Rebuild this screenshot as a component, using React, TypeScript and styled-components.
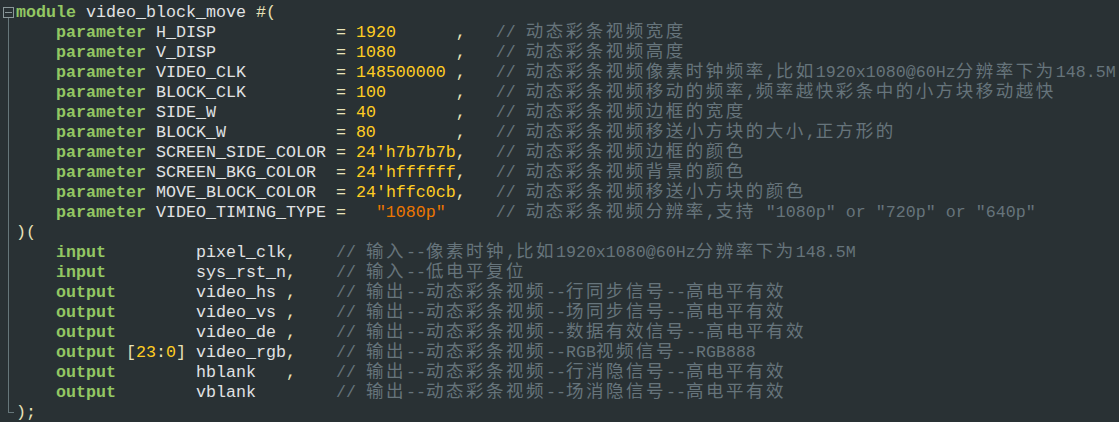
import React from "react";
import styled, { createGlobalStyle } from "styled-components";

type Kind = "kw" | "id" | "num" | "str" | "op" | "cm" | "sp";
type Token = [Kind, string];
type Fold = "start" | "mid" | "end";

const colors: Record<Kind, string> = {
  kw: "#93c763",
  id: "#e0e2e4",
  num: "#ffcd22",
  str: "#ec7600",
  op: "#e8e2b7",
  cm: "#66747b",
  sp: "#e0e2e4",
};

const Global = createGlobalStyle`
  html, body { margin: 0; padding: 0; background: #293134; }
  body { width: 1119px; height: 422px; overflow: hidden; }
`;

const Editor = styled.div`
  width: 1119px;
  height: 422px;
  box-sizing: border-box;
  padding-top: 3px;
  background: #293134;
  display: flex;
  flex-direction: column;
  font-family: "Liberation Mono", "Courier New", monospace;
  font-size: 16.667px;
  line-height: 20px;
`;

const Row = styled.div`
  display: grid;
  grid-template-columns: 16px 1fr;
  height: 20px;
`;

const Gutter = styled.div`
  width: 16px;
  height: 20px;
  display: flex;
`;

const Code = styled.div`
  white-space: pre;
  color: #e0e2e4;
  height: 20px;
`;

const Tok = styled.span<{ $k: Kind }>`
  color: ${(p) => colors[p.$k]};
  font-weight: ${(p) => (p.$k === "kw" ? 700 : 400)};
`;

const Wide = styled.span`
  font-family: "Noto Sans CJK SC", "Noto Sans", sans-serif;
  font-size: 17.5px;
  line-height: 10px;
  letter-spacing: 2.5px;
`;

const FoldMark: React.FC<{ kind: Fold }> = ({ kind }) => (
  <svg width="16" height="20" viewBox="0 0 16 20">
    {kind === "start" && (
      <>
        <rect x="3.5" y="4.5" width="10" height="10" fill="none" stroke="#8a9799" />
        <line x1="5" y1="9.5" x2="12" y2="9.5" stroke="#8a9799" />
        <line x1="8.5" y1="15" x2="8.5" y2="20" stroke="#66767a" />
      </>
    )}
    {kind === "mid" && <line x1="8.5" y1="0" x2="8.5" y2="20" stroke="#66767a" />}
    {kind === "end" && (
      <>
        <line x1="8.5" y1="0" x2="8.5" y2="10" stroke="#66767a" />
        <line x1="8" y1="9.5" x2="14" y2="9.5" stroke="#66767a" />
      </>
    )}
  </svg>
);

const cjk = /([\u2E80-\u9FFF\uFF00-\uFFEF]+)/;

const Text: React.FC<{ text: string }> = ({ text }) => (
  <>
    {text.split(cjk).map((part, i) =>
      cjk.test(part) ? <Wide key={i}>{part}</Wide> : <React.Fragment key={i}>{part}</React.Fragment>
    )}
  </>
);

const len = (toks: Token[]) => toks.reduce((n, t) => n + t[1].length, 0);
const pad = (toks: Token[], col: number): Token[] => [...toks, ["sp", " ".repeat(Math.max(0, col - len(toks)))]];

function param(name: string, value: string, kind: "num" | "str", comment: string): Token[] {
  let t: Token[] = [["sp", "    "], ["kw", "parameter"], ["sp", " "], ["id", name]];
  t = pad(t, 32);
  t.push(["op", "="]);
  if (kind === "num") {
    t.push(["sp", " "], ["num", value]);
    t = pad(t, 44);
    t.push(["op", ","]);
  } else {
    t.push(["sp", "   "], ["str", value]);
  }
  t = pad(t, 48);
  t.push(["cm", "// " + comment]);
  return t;
}

function port(dir: string, name: string, gap: string, comma: boolean, comment: string, range?: boolean): Token[] {
  let t: Token[] = [["sp", "    "], ["kw", dir]];
  if (range) {
    t.push(["sp", " "], ["op", "["], ["num", "23"], ["op", ":"], ["num", "0"], ["op", "]"]);
  }
  t = pad(t, 18);
  t.push(["id", name]);
  if (comma) t.push(["sp", gap], ["op", ","]);
  t = pad(t, 32);
  t.push(["cm", "// " + comment]);
  return t;
}

const lines: Token[][] = [
  [["kw", "module"], ["id", " video_block_move "], ["op", "#("]],
  param("H_DISP", "1920", "num", "动态彩条视频宽度"),
  param("V_DISP", "1080", "num", "动态彩条视频高度"),
  param("VIDEO_CLK", "148500000", "num", "动态彩条视频像素时钟频率,比如1920x1080@60Hz分辨率下为148.5M"),
  param("BLOCK_CLK", "100", "num", "动态彩条视频移动的频率,频率越快彩条中的小方块移动越快"),
  param("SIDE_W", "40", "num", "动态彩条视频边框的宽度"),
  param("BLOCK_W", "80", "num", "动态彩条视频移送小方块的大小,正方形的"),
  param("SCREEN_SIDE_COLOR", "24'h7b7b7b", "num", "动态彩条视频边框的颜色"),
  param("SCREEN_BKG_COLOR", "24'hffffff", "num", "动态彩条视频背景的颜色"),
  param("MOVE_BLOCK_COLOR", "24'hffc0cb", "num", "动态彩条视频移送小方块的颜色"),
  param("VIDEO_TIMING_TYPE", "\"1080p\"", "str", "动态彩条视频分辨率,支持 \"1080p\" or \"720p\" or \"640p\""),
  [["op", ")("]],
  port("input", "pixel_clk", "", true, "输入--像素时钟,比如1920x1080@60Hz分辨率下为148.5M"),
  port("input", "sys_rst_n", "", true, "输入--低电平复位"),
  port("output", "video_hs", " ", true, "输出--动态彩条视频--行同步信号--高电平有效"),
  port("output", "video_vs", " ", true, "输出--动态彩条视频--场同步信号--高电平有效"),
  port("output", "video_de", " ", true, "输出--动态彩条视频--数据有效信号--高电平有效"),
  port("output", "video_rgb", "", true, "输出--动态彩条视频--RGB视频信号--RGB888", true),
  port("output", "hblank", "   ", true, "输出--动态彩条视频--行消隐信号--高电平有效"),
  port("output", "vblank", "", false, "输出--动态彩条视频--场消隐信号--高电平有效"),
  [["op", ");"]],
];

export default function App() {
  return (
    <>
      <Global />
      <Editor>
        {lines.map((toks, i) => {
          const fold: Fold = i === 0 ? "start" : i === lines.length - 1 ? "end" : "mid";
          return (
            <Row key={i}>
              <Gutter>
                <FoldMark kind={fold} />
              </Gutter>
              <Code>
                {toks.map(([k, s], j) => (
                  <Tok key={j} $k={k}>
                    {k === "cm" ? <Text text={s} /> : s}
                  </Tok>
                ))}
              </Code>
            </Row>
          );
        })}
      </Editor>
    </>
  );
}
